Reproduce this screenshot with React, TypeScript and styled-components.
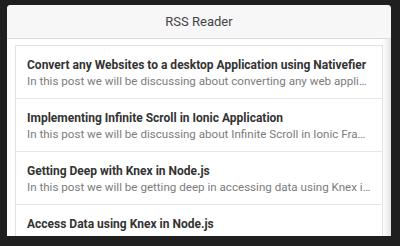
import React from 'react';
import styled, { createGlobalStyle } from 'styled-components';

interface Post {
  id: number;
  title: string;
  excerpt: string;
}

const posts: Post[] = [
  {
    id: 1,
    title: 'Convert any Websites to a desktop Application using Nativefier',
    excerpt: 'In this post we will be discussing about converting any web application into a desktop application',
  },
  {
    id: 2,
    title: 'Implementing Infinite Scroll in Ionic Application',
    excerpt: 'In this post we will be discussing about Infinite Scroll in Ionic Framework applications',
  },
  {
    id: 3,
    title: 'Getting Deep with Knex in Node.js',
    excerpt: 'In this post we will be getting deep in accessing data using Knex in Node.js',
  },
  {
    id: 4,
    title: 'Access Data using Knex in Node.js',
    excerpt: 'In this post we will be discussing about accessing data using Knex in Node.js',
  },
];

const GlobalStyle = createGlobalStyle`
  html, body {
    margin: 0;
    padding: 0;
    background: #1f1f1f;
    font-family: Roboto, "Noto Sans", sans-serif;
  }
`;

const Window = styled.div`
  margin: 5px 9px 0 7px;
  height: 231px;
  background: #ffffff;
  border-radius: 4px 4px 0 0;
  overflow: hidden;
  display: flex;
  flex-direction: column;
  box-shadow: inset -9px 0 7px -6px rgba(0, 0, 0, 0.14);
`;

const TitleBar = styled.header`
  height: 33px;
  flex-shrink: 0;
  display: flex;
  align-items: center;
  justify-content: center;
  background: #f7f7f7;
  border-bottom: 1px solid #dcdcdc;
  color: #444;
  font-size: 13px;
`;

const Content = styled.main`
  flex: 1;
  min-height: 0;
  padding: 6px 8px 0 8px;
  overflow: hidden;
`;

const List = styled.ul`
  list-style: none;
  margin: 0;
  padding: 0;
  border: 1px solid #e2e2e2;
  background: #fff;
`;

const Item = styled.li`
  padding: 11px 10px 9px 11px;
  border-bottom: 1px solid #e6e6e6;
`;

const ItemTitle = styled.div`
  font-size: 12px;
  font-weight: 700;
  color: #333;
  line-height: 16px;
  white-space: nowrap;
  overflow: hidden;
  text-overflow: ellipsis;
`;

const ItemExcerpt = styled.div`
  font-size: 11.6px;
  color: #7c7c7c;
  line-height: 16px;
  white-space: nowrap;
  overflow: hidden;
  text-overflow: ellipsis;
`;

export default function App() {
  return (
    <>
      <GlobalStyle />
      <Window>
        <TitleBar>RSS Reader</TitleBar>
        <Content>
          <List>
            {posts.map((post) => (
              <Item key={post.id}>
                <ItemTitle>{post.title}</ItemTitle>
                <ItemExcerpt>{post.excerpt}</ItemExcerpt>
              </Item>
            ))}
          </List>
        </Content>
      </Window>
    </>
  );
}
